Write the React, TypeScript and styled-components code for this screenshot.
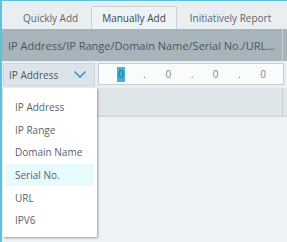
import styled, { createGlobalStyle } from "styled-components";

const GlobalStyle = createGlobalStyle`
  html, body {
    margin: 0;
    padding: 0;
    background: #e8eef1;
  }
  * {
    box-sizing: border-box;
  }
`;

const tabs = ["Quickly Add", "Manually Add", "Initiatively Report"];
const options = ["IP Address", "IP Range", "Domain Name", "Serial No.", "URL", "IPV6"];

const Chevron = () => (
  <svg width="14" height="9" viewBox="0 0 14 9">
    <path d="M1.5 1.5 L7 7 L12.5 1.5" fill="none" stroke="#2a9ec2" strokeWidth="1.6" />
  </svg>
);

export default function App() {
  return (
    <>
      <GlobalStyle />
      <Frame>
        <TabBar>
          {tabs.map((t) => (
            <Tab key={t} $active={t === "Manually Add"}>
              {t}
            </Tab>
          ))}
        </TabBar>
        <Header>
          <HeaderCell>IP Address/IP Range/Domain Name/Serial No./URL...</HeaderCell>
          <HeaderRest />
        </Header>
        <FilterRow>
          <Select>
            <span>IP Address</span>
            <Chevron />
          </Select>
          <IpInput>
            <Octet>
              <Selected>0</Selected>
            </Octet>
            <Dot>.</Dot>
            <Octet>0</Octet>
            <Dot>.</Dot>
            <Octet>0</Octet>
            <Dot>.</Dot>
            <Octet>0</Octet>
          </IpInput>
        </FilterRow>
        <Body>
          <Band>
            <BandCell />
            <BandRest />
          </Band>
          <Menu>
            {options.map((o) => (
              <MenuItem key={o} $hover={o === "Serial No."}>
                {o}
              </MenuItem>
            ))}
          </Menu>
        </Body>
      </Frame>
    </>
  );
}

const Frame = styled.div`
  width: 287px;
  height: 242px;
  border-top: 1px solid #58c3da;
  border-left: 2px solid #58c3da;
  background: #e8eef1;
  font-family: "Open Sans", "Liberation Sans", sans-serif;
  font-size: 10px;
  color: #5c646b;
  overflow: hidden;
  display: flex;
  flex-direction: column;
`;

const TabBar = styled.div`
  display: flex;
  align-items: flex-end;
  height: 28px;
  padding-left: 8px;
`;

const Tab = styled.div<{ $active: boolean }>`
  height: 23px;
  display: flex;
  align-items: center;
  justify-content: center;
  white-space: nowrap;
  padding: 0 ${(p) => (p.$active ? "10px" : "12px")};
  color: ${(p) => (p.$active ? "#3f474d" : "#5f676e")};
  background: ${(p) => (p.$active ? "#edf2f4" : "transparent")};
  border: 1px solid ${(p) => (p.$active ? "#c8d2d7" : "transparent")};
  border-bottom: none;
  border-radius: 2px 2px 0 0;
`;

const Header = styled.div`
  display: flex;
  height: 32px;
  background: #a7b4bb;
`;

const HeaderCell = styled.div`
  width: 281px;
  flex-shrink: 0;
  display: flex;
  align-items: center;
  padding-left: 6px;
  white-space: nowrap;
  color: #4b565d;
  font-size: 11px;
  border-right: 1px solid #c4ced3;
`;

const HeaderRest = styled.div`
  flex: 1;
`;

const FilterRow = styled.div`
  display: flex;
  gap: 3px;
  padding: 2px 0 0 1px;
  height: 27px;
`;

const Select = styled.div`
  width: 92px;
  height: 23px;
  display: flex;
  align-items: center;
  justify-content: space-between;
  padding: 0 7px 0 5px;
  background: #dce4e9;
  border: 1px solid #cdd6db;
  color: #4e575e;
`;

const IpInput = styled.div`
  width: 186px;
  height: 22px;
  display: flex;
  align-items: center;
  padding: 0 14px 0 16px;
  background: #fafbfb;
  border: 1px solid #c3cdd2;
  color: #7c858b;
`;

const Octet = styled.span`
  width: 12px;
  text-align: center;
`;

const Dot = styled.span`
  flex: 1;
  text-align: center;
`;

const Selected = styled.span`
  display: inline-block;
  background: #3fb3dc;
  color: #2a6f8c;
  padding: 1px 1px;
  line-height: 13px;
`;

const Body = styled.div`
  position: relative;
  flex: 1;
  background: #eef2f4;
`;

const Band = styled.div`
  display: flex;
  height: 29px;
  background: #dfe6ea;
  border-bottom: 2px solid #d2dade;
`;

const BandCell = styled.div`
  width: 281px;
  border-right: 1px solid #c4ced3;
`;

const BandRest = styled.div`
  flex: 1;
`;

const Menu = styled.div`
  position: absolute;
  top: 0;
  left: 1px;
  width: 94px;
  padding: 8px 0 5px;
  background: #ffffff;
  box-shadow: 1px 1px 2px rgba(0, 0, 0, 0.35);
`;

const MenuItem = styled.div<{ $hover: boolean }>`
  height: 22.6px;
  margin: 0 3px;
  display: flex;
  align-items: center;
  padding-left: 9px;
  color: #5a6268;
  background: ${(p) => (p.$hover ? "#e7fbfd" : "transparent")};
`;
